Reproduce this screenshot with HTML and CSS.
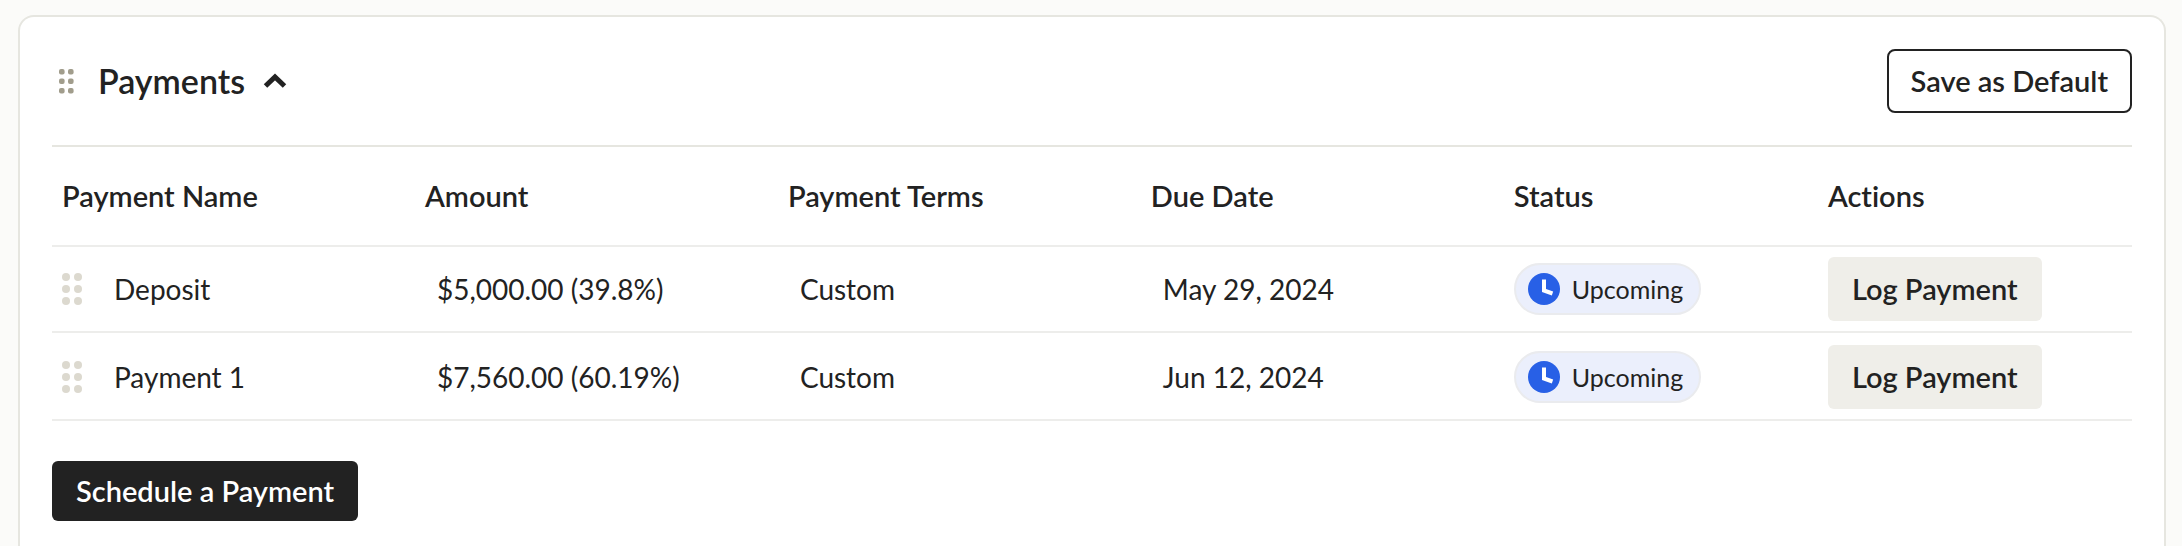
FILE: index.html
```html
<!DOCTYPE html>
<html lang="en">
<head>
  <meta charset="UTF-8">
  <meta name="viewport" content="width=device-width, initial-scale=1">
  <title>Payments</title>
  <link rel="stylesheet" href="styles.css">
</head>
<body>
  <svg class="sprite" aria-hidden="true">
    <symbol id="grip" viewBox="0 0 20 32">
      <circle cx="4" cy="4" r="4"/><circle cx="16" cy="4" r="4"/>
      <circle cx="4" cy="16" r="4"/><circle cx="16" cy="16" r="4"/>
      <circle cx="4" cy="28" r="4"/><circle cx="16" cy="28" r="4"/>
    </symbol>
    <symbol id="clock" viewBox="0 0 32 32">
      <circle cx="16" cy="16" r="16" fill="#2860e6"/>
      <path d="M16 6.5V17.5L24.5 20.5" fill="none" stroke="#fff" stroke-width="4"/>
    </symbol>
  </svg>

  <section class="card">
    <header class="card-header">
      <svg class="header-grip" viewBox="0 0 15 25" aria-hidden="true">
        <rect x="0" y="0" width="5.6" height="5.6" rx="2"/><rect x="9" y="0" width="5.6" height="5.6" rx="2"/>
        <rect x="0" y="9.5" width="5.6" height="5.6" rx="2"/><rect x="9" y="9.5" width="5.6" height="5.6" rx="2"/>
        <rect x="0" y="19" width="5.6" height="5.6" rx="2"/><rect x="9" y="19" width="5.6" height="5.6" rx="2"/>
      </svg>
      <h2>Payments</h2>
      <button class="toggle" type="button" aria-label="Collapse payments">
        <svg viewBox="0 0 24 16" aria-hidden="true"><path d="M2.5 13L12 4L21.5 13"/></svg>
      </button>
      <button class="btn btn-outline" type="button">Save as Default</button>
    </header>

    <table>
      <thead>
        <tr>
          <th class="col-wide">Payment Name</th>
          <th class="col-wide">Amount</th>
          <th class="col-wide">Payment Terms</th>
          <th class="col-wide">Due Date</th>
          <th>Status</th>
          <th>Actions</th>
        </tr>
      </thead>
      <tbody>
        <tr>
          <td><div class="name"><svg class="grip" aria-hidden="true"><use href="#grip"/></svg>Deposit</div></td>
          <td class="value">$5,000.00 (39.8%)</td>
          <td class="value">Custom</td>
          <td class="value">May 29, 2024</td>
          <td><span class="badge"><svg aria-hidden="true"><use href="#clock"/></svg>Upcoming</span></td>
          <td><button class="btn btn-light" type="button">Log Payment</button></td>
        </tr>
        <tr>
          <td><div class="name"><svg class="grip" aria-hidden="true"><use href="#grip"/></svg>Payment 1</div></td>
          <td class="value">$7,560.00 (60.19%)</td>
          <td class="value">Custom</td>
          <td class="value">Jun 12, 2024</td>
          <td><span class="badge"><svg aria-hidden="true"><use href="#clock"/></svg>Upcoming</span></td>
          <td><button class="btn btn-light" type="button">Log Payment</button></td>
        </tr>
      </tbody>
    </table>

    <button class="btn btn-dark" type="button">Schedule a Payment</button>
  </section>
</body>
</html>
```
FILE: styles.css
```css
* {
  box-sizing: border-box;
}
body {
  margin: 0;
  padding: 15px 16px 0 18px;
  background-color: #fbfbf9;
  color: #222;
  font-family: Lato, "Open Sans", sans-serif;
  font-size: 28px;
  font-variant-ligatures: none;
  line-height: 36px;
}
.sprite {
  display: none;
}
.card {
  min-height: calc(100vh - 15px);
  padding: 0 32px 24px;
  background-color: #fff;
  border: 2px solid #e6e6e0;
  border-bottom: none;
  border-radius: 16px 16px 0 0;
}
.card-header {
  display: flex;
  align-items: center;
  padding: 32px 0;
  border-bottom: 2px solid #e6e6e0;
}
.header-grip {
  width: 15px;
  height: 25px;
  margin: 0 24px 0 7px;
  fill: #a19d8c;
}
h2 {
  margin: 0;
  font-size: 34px;
  font-weight: 600;
}
.toggle {
  display: flex;
  margin-left: 10px;
  padding: 8px;
  background: none;
  border: none;
  cursor: pointer;
}
.toggle svg {
  width: 24px;
  height: 16px;
  fill: none;
  stroke: #222;
  stroke-width: 5;
}
.btn {
  height: 64px;
  padding: 0 24px;
  border: none;
  border-radius: 6px;
  color: #222;
  font: inherit;
  font-size: 29px;
  font-weight: 600;
  white-space: nowrap;
  cursor: pointer;
}
.btn-outline {
  margin-left: auto;
  padding: 0 22px;
  background-color: #fff;
  border: 2px solid #222;
  border-radius: 8px;
}
.btn-light {
  display: block;
  background-color: #efeee9;
}
.btn-dark {
  height: 60px;
  margin-top: 40px;
  background-color: #222;
  color: #fff;
}
table {
  width: 100%;
  table-layout: fixed;
  border-spacing: 0;
}
th, td {
  padding: 10px;
  border-bottom: 2px solid #ededeb;
  text-align: left;
}
th {
  padding: 31px 10px;
  font-size: 29px;
  font-weight: 600;
}
tbody tr + tr td {
  padding-top: 12px;
}
.col-wide {
  width: 17.45%;
}
td.value {
  padding-left: 22px;
}
.name {
  display: flex;
  align-items: center;
  gap: 32px;
}
.grip {
  width: 20px;
  height: 32px;
  fill: #dcd9cf;
}
.badge {
  display: inline-flex;
  align-items: center;
  gap: 12px;
  height: 52px;
  padding: 0 16px 0 12px;
  vertical-align: middle;
  background-color: #ebeffc;
  border: 2px solid #eaebee;
  border-radius: 26px;
  font-size: 25px;
}
.badge svg {
  width: 32px;
  height: 32px;
}
```
